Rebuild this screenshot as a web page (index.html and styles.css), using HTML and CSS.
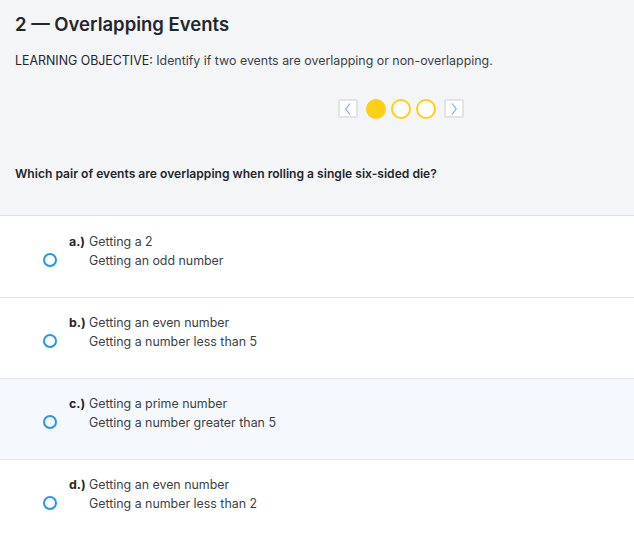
FILE: index.html
```html
<!DOCTYPE html>
<html>
<head>
<meta charset="utf-8">
<link rel="stylesheet" href="styles.css">
</head>
<body>
<div class="header">
  <h1 class="title">2 — Overlapping Events</h1>
  <p class="objective"><span class="obj-label">LEARNING OBJECTIVE:</span> Identify if two events are overlapping or non-overlapping.</p>
  <div class="pager">
    <span class="nav-box">
      <svg width="10" height="14" viewBox="0 0 10 14"><path d="M7 1.5 L2.8 7 L7 12.5" fill="none" stroke="#6aa5f2" stroke-width="1.1"/></svg>
    </span>
    <span class="dots">
      <span class="dot filled"></span>
      <span class="dot"></span>
      <span class="dot"></span>
    </span>
    <span class="nav-box">
      <svg width="10" height="14" viewBox="0 0 10 14"><path d="M3 1.5 L7.2 7 L3 12.5" fill="none" stroke="#6aa5f2" stroke-width="1.1"/></svg>
    </span>
  </div>
  <p class="question">Which pair of events are overlapping when rolling a single six-sided die?</p>
</div>
<div class="options">
  <div class="option">
    <span class="radio"></span>
    <div class="opt-text">
      <span class="letter">a.)</span>
      <div class="lines"><div>Getting a 2</div><div>Getting an odd number</div></div>
    </div>
  </div>
  <div class="option">
    <span class="radio"></span>
    <div class="opt-text">
      <span class="letter">b.)</span>
      <div class="lines"><div>Getting an even number</div><div>Getting a number less than 5</div></div>
    </div>
  </div>
  <div class="option hover">
    <span class="radio"></span>
    <div class="opt-text">
      <span class="letter">c.)</span>
      <div class="lines"><div>Getting a prime number</div><div>Getting a number greater than 5</div></div>
    </div>
  </div>
  <div class="option">
    <span class="radio"></span>
    <div class="opt-text">
      <span class="letter">d.)</span>
      <div class="lines"><div>Getting an even number</div><div>Getting a number less than 2</div></div>
    </div>
  </div>
</div>
</body>
</html>
```
FILE: styles.css
```css
html, body {
  margin: 0;
  padding: 0;
  background: #ffffff;
  font-family: "Inter", "Open Sans", sans-serif;
  color: #3a3f45;
}
.header {
  background: #f4f5f7;
  border-bottom: 1px solid #dfe1e4;
  padding: 12px 15px 33px 15px;
}
.title {
  margin: 0;
  font-size: 18.5px;
  font-weight: 600;
  line-height: 24px;
  color: #23262b;
}
.objective {
  margin: 17px 0 0 0;
  font-size: 12.4px;
  line-height: 16px;
}
.obj-label {
  color: #23262b;
}
.pager {
  display: flex;
  align-items: center;
  margin: 30px 0 0 323px;
  gap: 8px;
  height: 19px;
}
.nav-box {
  width: 16px;
  height: 15px;
  border: 2px solid #e1e3e6;
  border-radius: 2px;
  background: #fff;
  display: flex;
  align-items: center;
  justify-content: center;
}
.dots {
  display: flex;
  gap: 5px;
}
.dot {
  width: 16px;
  height: 16px;
  border-radius: 50%;
  border: 2px solid #fdd017;
  background: #fff;
}
.dot.filled {
  background: #fdd017;
}
.question {
  margin: 48px 0 0 0;
  font-size: 12.1px;
  line-height: 16px;
  font-weight: 600;
  color: #23262b;
}
.options {
  padding-top: 1px;
}
.option {
  display: flex;
  align-items: flex-start;
  height: 80px;
  border-bottom: 1px solid #e2e4e7;
  padding-left: 43px;
}
.option.hover {
  background: #f5f9fd;
}
.radio {
  width: 10px;
  height: 10px;
  border: 2px solid #2196f3;
  border-radius: 50%;
  flex: none;
  margin-top: 36px;
}
.opt-text {
  display: flex;
  margin-left: 12px;
  padding-top: 15px;
  font-size: 12.4px;
  line-height: 19px;
}
.letter {
  font-weight: 700;
  width: 20px;
  color: #23262b;
}
```
